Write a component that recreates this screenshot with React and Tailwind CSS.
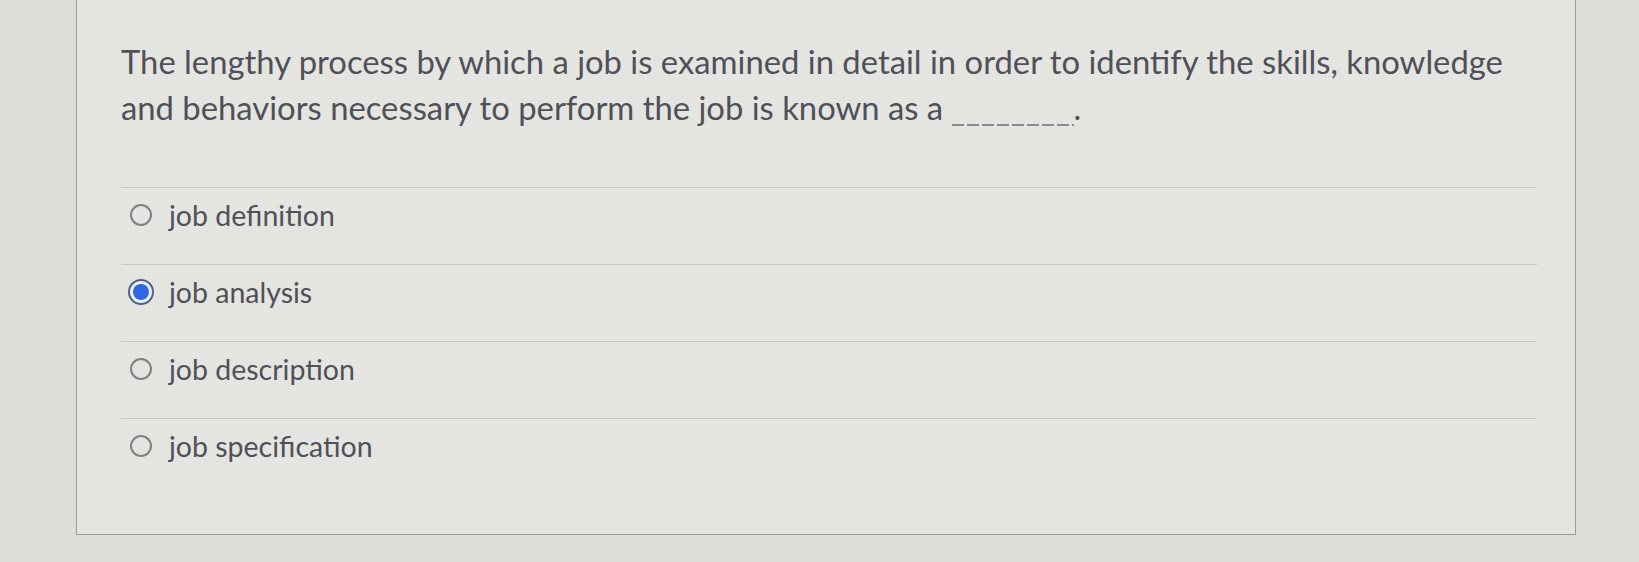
import React from "react";

const options = [
  { label: "job definition", selected: false },
  { label: "job analysis", selected: true },
  { label: "job description", selected: false },
  { label: "job specification", selected: false },
];

function Radio({ selected }) {
  if (selected) {
    return (
      <span className="flex h-[26px] w-[26px] items-center justify-center rounded-full border-2 border-[#4f6190] bg-[#eef0f6]">
        <span className="h-[16px] w-[16px] rounded-full bg-[#2f67e0]" />
      </span>
    );
  }
  return <span className="h-[22px] w-[22px] rounded-full border-2 border-[#808082]" />;
}

export default function App() {
  return (
    <div
      className="h-[562px] w-full overflow-hidden bg-[#dcdcd8] text-[#505058]"
      style={{ fontFamily: "Lato, 'Open Sans', sans-serif" }}
    >
      <div className="ml-[76px] h-[535px] w-[1500px] border-x-[1.5px] border-b-[1.5px] border-[#9c9c9a] bg-[#e4e4e1] pl-[44px] pr-[38px]">
        <p className="pt-[39px] text-[32.8px] leading-[46px]">
          The lengthy process by which a job is examined in detail in order to identify the skills, knowledge
          <br />
          and behaviors necessary to perform the job is known as a{" "}
          <span className="inline-block h-[2px] w-[122px] bg-[repeating-linear-gradient(90deg,#8c8c90_0_12px,transparent_12px_15px)] align-[-6px]" />
          <span>.</span>
        </p>

        <div className="mt-[56px]">
          {options.map((o) => (
            <div
              key={o.label}
              className="flex h-[77px] items-start border-t-[1.5px] border-[#c6c6c4] pl-[6px] pt-[11px]"
            >
              <div className="flex h-[32px] items-center gap-[14px]">
                <span className="flex w-[28px] justify-center">
                  <Radio selected={o.selected} />
                </span>
                <span className="text-[28.5px] leading-[32px]">{o.label}</span>
              </div>
            </div>
          ))}
        </div>
      </div>
    </div>
  );
}
